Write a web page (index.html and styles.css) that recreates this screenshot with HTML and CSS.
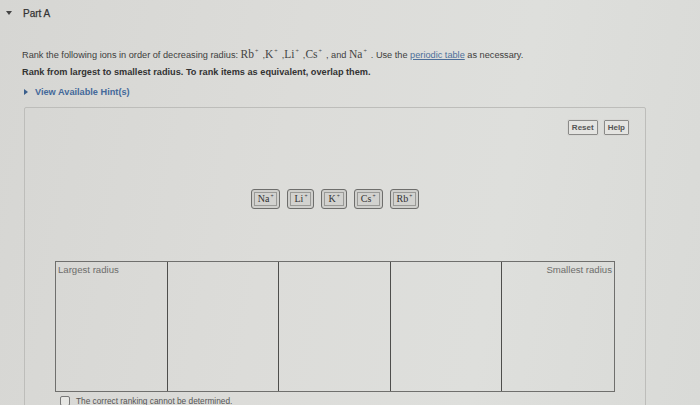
FILE: index.html
```html
<!DOCTYPE html>
<html>
<head>
<meta charset="utf-8">
<link rel="stylesheet" href="styles.css">
</head>
<body>
<div class="header">
  <span class="caret-down"></span>
  <span class="part-title">Part A</span>
</div>
<div class="content">
  <p class="question">Rank the following ions in order of decreasing radius: <span class="ion">Rb<sup>+</sup></span>,<span class="ion">K<sup>+</sup></span>,<span class="ion">Li<sup>+</sup></span>,<span class="ion">Cs<sup>+</sup></span>, and <span class="ion">Na<sup>+</sup></span>. Use the <span class="link">periodic table</span> as necessary.</p>
  <p class="instr">Rank from largest to smallest radius. To rank items as equivalent, overlap them.</p>
  <div class="hint"><span class="caret-right"></span><span>View Available Hint(s)</span></div>
  <div class="panel">
    <div class="tools">
      <span class="btn">Reset</span>
      <span class="btn">Help</span>
    </div>
    <div class="chips">
      <span class="chip">Na<sup>+</sup></span>
      <span class="chip">Li<sup>+</sup></span>
      <span class="chip">K<sup>+</sup></span>
      <span class="chip">Cs<sup>+</sup></span>
      <span class="chip">Rb<sup>+</sup></span>
    </div>
    <div class="rank">
      <div class="cell"><span class="lbl">Largest radius</span></div>
      <div class="cell"></div>
      <div class="cell"></div>
      <div class="cell"></div>
      <div class="cell right"><span class="lbl">Smallest radius</span></div>
    </div>
    <div class="check"><span class="box"></span><span>The correct ranking cannot be determined.</span></div>
  </div>
</div>
</body>
</html>
```
FILE: styles.css
```css
html, body {
  margin: 0;
  padding: 0;
}
body {
  width: 700px;
  height: 405px;
  overflow: hidden;
  background: linear-gradient(100deg, #d6d6d3 0%, #dcdcd9 40%, #dedfdc 70%, #d9dad7 100%);
  font-family: "Liberation Sans", Arial, sans-serif;
  color: #3b3b3b;
}
.header {
  height: 26px;
  display: flex;
  align-items: center;
  padding-left: 6px;
}
.caret-down {
  width: 0;
  height: 0;
  border-left: 3px solid transparent;
  border-right: 3px solid transparent;
  border-top: 4px solid #444;
  margin-right: 11px;
}
.part-title {
  font-size: 10px;
  color: #333;
  -webkit-text-stroke: 0.25px #333;
}
.content {
  padding-left: 22px;
}
.question {
  margin: 22px 0 0 0;
  font-size: 9.2px;
  line-height: 11px;
  color: #3d3d3d;
  white-space: nowrap;
}
.ion {
  font-family: "Liberation Serif", "Times New Roman", serif;
  font-size: 11.5px;
  color: #444;
}
sup {
  font-size: 6px;
  vertical-align: super;
  line-height: 1;
}
.question sup {
  margin: 0 4px 0 1px;
}
.link {
  color: #4d6f9a;
  text-decoration: underline;
}
.instr {
  margin: 6px 0 0 0;
  font-size: 9.2px;
  line-height: 11px;
  font-weight: bold;
  color: #333;
  white-space: nowrap;
}
.hint {
  margin-top: 9px;
  display: flex;
  align-items: center;
  font-size: 9.2px;
  font-weight: bold;
  color: #44699a;
  padding-left: 2px;
  height: 11px;
}
.caret-right {
  width: 0;
  height: 0;
  border-top: 3px solid transparent;
  border-bottom: 3px solid transparent;
  border-left: 4px solid #3b5f8c;
  margin-right: 7px;
}
.panel {
  margin-top: 9px;
  margin-left: 2px;
  width: 622px;
  height: 320px;
  border: 1px solid #bdbdba;
  border-radius: 2px;
  box-sizing: border-box;
  position: relative;
}
.tools {
  display: flex;
  justify-content: flex-end;
  gap: 6px;
  padding: 12px 16px 0 0;
}
.btn {
  font-size: 8px;
  font-weight: bold;
  color: #555;
  border: 1px solid #8a8a88;
  outline: 1px solid #d8d8d5;
  background: #e4e4e1;
  padding: 2px 3px;
  line-height: 9px;
  border-radius: 1px;
}
.chips {
  margin-top: 54px;
  display: flex;
  justify-content: center;
  gap: 7px;
}
.chip {
  font-family: "Liberation Serif", "Times New Roman", serif;
  font-size: 10px;
  color: #333;
  background: #d2d2cf;
  border: 1px solid #6e6e6c;
  box-shadow: inset 0 0 0 2px #cfcfcc, inset 0 0 0 3px #9a9a97;
  border-radius: 3px;
  padding: 0 6px;
  height: 18px;
  line-height: 18px;
}
.chip sup {
  font-size: 5.5px;
  margin-left: 1px;
}
.rank {
  margin: 52px 0 0 30px;
  width: 560px;
  height: 131px;
  display: grid;
  grid-template-columns: repeat(5, 1fr);
  border: 1px solid #6f6f6d;
  box-sizing: border-box;
}
.cell {
  border-right: 1px solid #4e4e4c;
  padding: 0 2px;
  line-height: 12px;
}
.cell:last-child {
  border-right: none;
}
.cell.right {
  text-align: right;
}
.lbl {
  font-size: 9.6px;
  color: #6d6d6b;
}
.check {
  margin: 4px 0 0 35px;
  display: flex;
  align-items: center;
  gap: 6px;
  font-size: 8.3px;
  color: #555;
}
.box {
  width: 8px;
  height: 8px;
  border: 1px solid #777;
  border-radius: 2px;
  background: #e6e6e3;
}
```
